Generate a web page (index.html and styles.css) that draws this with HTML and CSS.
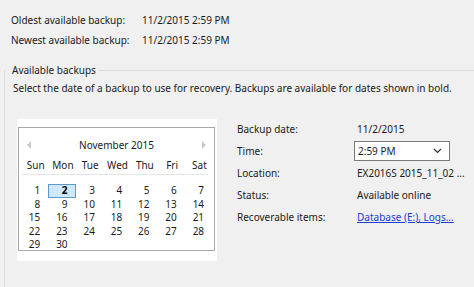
FILE: index.html
```html
<html lang="en">
<head>
    <meta charset="UTF-8">
    <title>Available backups</title>
    <link rel="stylesheet" href="styles.css">
</head>
<body>
    <div class="summary">
        <span class="summary-label">Oldest available backup:</span>
        <span>11/2/2015 2:59 PM</span>
        <span class="summary-label">Newest available backup:</span>
        <span>11/2/2015 2:59 PM</span>
    </div>

    <fieldset class="group">
        <legend>Available backups</legend>
        <p class="hint">Select the date of a backup to use for recovery. Backups are available for dates shown in bold.</p>

        <div class="group-body">
            <div class="calendar-wrap">
                <div class="calendar">
                    <div class="calendar-title">
                        <span class="arrow arrow-left"></span>
                        <span>November 2015</span>
                        <span class="arrow arrow-right"></span>
                    </div>
                    <div class="weekdays">
                        <span>Sun</span><span>Mon</span><span>Tue</span><span>Wed</span><span>Thu</span><span>Fri</span><span>Sat</span>
                    </div>
                    <div class="days" id="days"></div>
                </div>
            </div>

            <div class="details">
                <span class="detail-label">Backup date:</span>
                <span>11/2/2015</span>

                <span class="detail-label">Time:</span>
                <div class="time-select">
                    <span>2:59 PM</span>
                    <svg width="9" height="6" viewBox="0 0 9 6"><path d="M1 1 L4.5 4.5 L8 1" fill="none" stroke="#333" stroke-width="1.2"/></svg>
                </div>

                <span class="detail-label">Location:</span>
                <span>EX2016S 2015_11_02 ...</span>

                <span class="detail-label">Status:</span>
                <span>Available online</span>

                <span class="detail-label">Recoverable items:</span>
                <a href="#" class="link">Database (E:), Logs...</a>
            </div>
        </div>
    </fieldset>

    <script>
        // November 2015 starts on a Sunday, 30 days
        const days = document.getElementById('days');
        for (let d = 1; d <= 30; d++) {
            const cell = document.createElement('span');
            cell.textContent = d;
            if (d === 2) cell.className = 'selected';
            days.appendChild(cell);
        }
    </script>
</body>
</html>
```

FILE: styles.css
```css
body {
    margin: 0;
    background-color: #f0f0f0;
    font-family: "Noto Sans", Arial, sans-serif;
    font-size: 10px;
    color: #1a1a1a;
}
.summary {
    display: grid;
    grid-template-columns: 131px auto;
    row-gap: 4px;
    line-height: 16px;
    padding: 12px 0 0 11px;
}
.group {
    margin: 14px 0 0 4px;
    padding: 0;
    border: none;
    border-top: 1px solid #dcdcdc;
    border-left: 1px solid #dcdcdc;
    height: 230px;
}
.group legend {
    padding: 0 3px 0 7px;
    margin-left: 0;
    line-height: 16px;
}
.hint {
    margin: 2px 0 0 8px;
    line-height: 16px;
}
.group-body {
    display: flex;
    margin-top: 23px;
}
.calendar-wrap {
    margin-left: 12px;
    width: 197px;
    padding: 8px 2px 10px 1px;
    background-color: #fff;
}
.calendar {
    border: 1px solid #a8a8a8;
    padding: 0 2px;
    height: 122px;
}
.calendar-title {
    display: flex;
    justify-content: space-between;
    align-items: center;
    line-height: 16px;
    padding: 9px 6px 0 6px;
}
.arrow {
    width: 0;
    height: 0;
    border-top: 4px solid transparent;
    border-bottom: 4px solid transparent;
}
.arrow-left {
    border-right: 4px solid #c8c8c8;
}
.arrow-right {
    border-left: 4px solid #c8c8c8;
}
.weekdays,
.days {
    display: grid;
    grid-template-columns: repeat(7, 27.3px);
}
.weekdays {
    margin: 4px 4px 0 1px;
    padding-bottom: 1px;
    border-bottom: 1px solid #e6e6e6;
    line-height: 16px;
}
.weekdays span {
    text-align: center;
}
.days {
    margin-top: 9px;
    line-height: 13.5px;
}
.days span {
    text-align: right;
    padding-right: 7px;
    border: 1px solid transparent;
    line-height: 11.5px;
}
.days .selected {
    font-weight: bold;
    background-color: #cde8ff;
    border-color: #5b9bd5;
    color: #000;
}
.details {
    display: grid;
    grid-template-columns: 120px auto;
    grid-auto-rows: 22px;
    align-items: center;
    margin: -1px 0 0 20px;
}
.detail-label {
    white-space: nowrap;
}
.time-select {
    display: flex;
    justify-content: space-between;
    align-items: center;
    width: 84px;
    height: 18px;
    margin-left: -3px;
    padding: 0 7px 0 3px;
    background-color: #fff;
    border: 1px solid #7a7a7a;
}
.link {
    color: #1a3bd6;
    text-decoration: underline;
    white-space: nowrap;
}
```
